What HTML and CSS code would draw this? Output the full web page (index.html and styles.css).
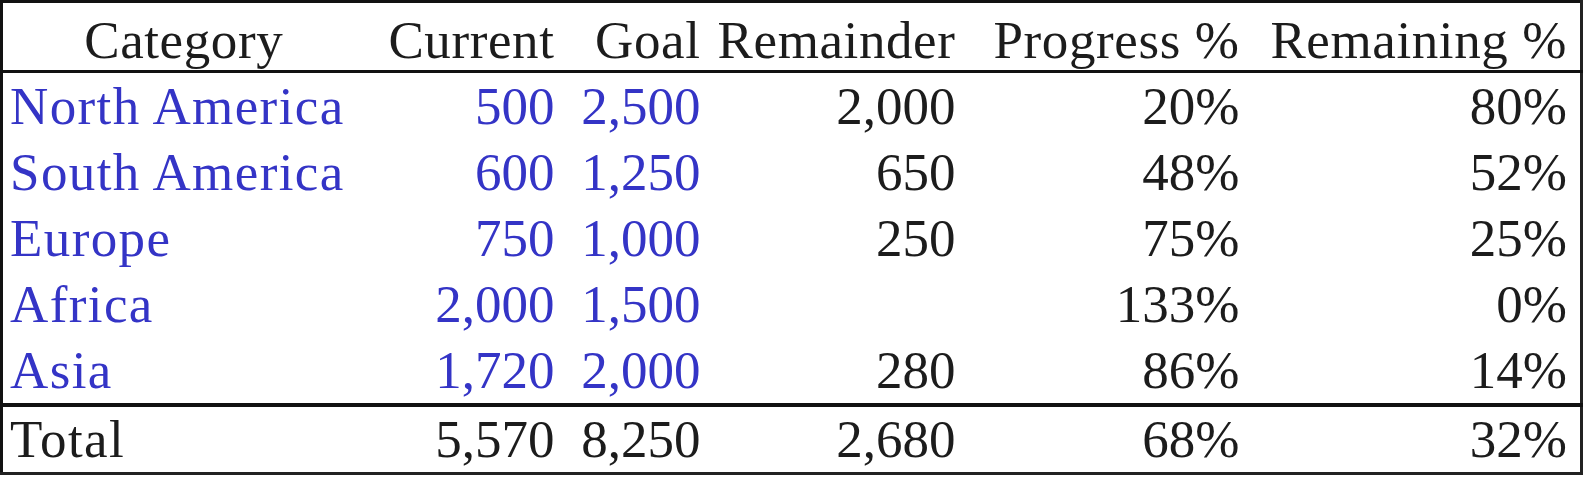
FILE: index.html
```html
<!DOCTYPE html>
<html lang="en">
<head>
<meta charset="utf-8">
<title>Progress table</title>
<link rel="stylesheet" href="styles.css">
</head>
<body>
<table class="tbl">
  <colgroup>
    <col class="c-cat">
    <col class="c-cur">
    <col class="c-goal">
    <col class="c-rem">
    <col class="c-prog">
    <col class="c-left">
  </colgroup>
  <thead>
    <tr class="head">
      <th class="cat">Category</th>
      <th>Current</th>
      <th>Goal</th>
      <th>Remainder</th>
      <th>Progress %</th>
      <th class="last">Remaining %</th>
    </tr>
  </thead>
  <tbody>
    <tr class="row">
      <td class="name blue">North America</td>
      <td class="blue">500</td>
      <td class="blue">2,500</td>
      <td>2,000</td>
      <td>20%</td>
      <td class="last">80%</td>
    </tr>
    <tr class="row">
      <td class="name blue">South America</td>
      <td class="blue">600</td>
      <td class="blue">1,250</td>
      <td>650</td>
      <td>48%</td>
      <td class="last">52%</td>
    </tr>
    <tr class="row">
      <td class="name blue">Europe</td>
      <td class="blue">750</td>
      <td class="blue">1,000</td>
      <td>250</td>
      <td>75%</td>
      <td class="last">25%</td>
    </tr>
    <tr class="row">
      <td class="name blue">Africa</td>
      <td class="blue">2,000</td>
      <td class="blue">1,500</td>
      <td></td>
      <td>133%</td>
      <td class="last">0%</td>
    </tr>
    <tr class="row">
      <td class="name blue">Asia</td>
      <td class="blue">1,720</td>
      <td class="blue">2,000</td>
      <td>280</td>
      <td>86%</td>
      <td class="last">14%</td>
    </tr>
  </tbody>
  <tfoot>
    <tr class="total">
      <td class="name">Total</td>
      <td>5,570</td>
      <td>8,250</td>
      <td>2,680</td>
      <td>68%</td>
      <td class="last">32%</td>
    </tr>
  </tfoot>
</table>
</body>
</html>
```
FILE: styles.css
```css
html, body {
  margin: 0;
  padding: 0;
  background: #ffffff;
}

.tbl {
  border-collapse: collapse;
  table-layout: fixed;
  width: 1583px;
  font-family: "Liberation Serif", "Times New Roman", serif;
  font-size: 53px;
  color: #1c1c1c;
  border-top: 3px solid #111;
  border-left: 3px solid #111;
  border-right: 3px solid #222;
  border-bottom: 3px solid #222;
}

.c-cat { width: 363px; }
.c-cur { width: 198px; }
.c-goal { width: 146px; }
.c-rem { width: 255px; }
.c-prog { width: 284px; }
.c-left { width: 334px; }

th, td {
  padding: 0 8px 0 0;
  text-align: right;
  white-space: nowrap;
  font-weight: normal;
  vertical-align: top;
}

.head th {
  padding-top: 7px;
  line-height: 60px;
  letter-spacing: 0.6px;
  border-bottom: 3px solid #111;
}

.head th.cat {
  text-align: center;
  padding-right: 0;
}

.row td {
  line-height: 66px;
}

.total td {
  line-height: 65px;
  border-top: 4px solid #111;
}

td.name {
  text-align: left;
  padding-left: 7px;
  letter-spacing: 1.4px;
}

.last {
  padding-right: 13px;
}

.blue {
  color: #3434c6;
}
```
